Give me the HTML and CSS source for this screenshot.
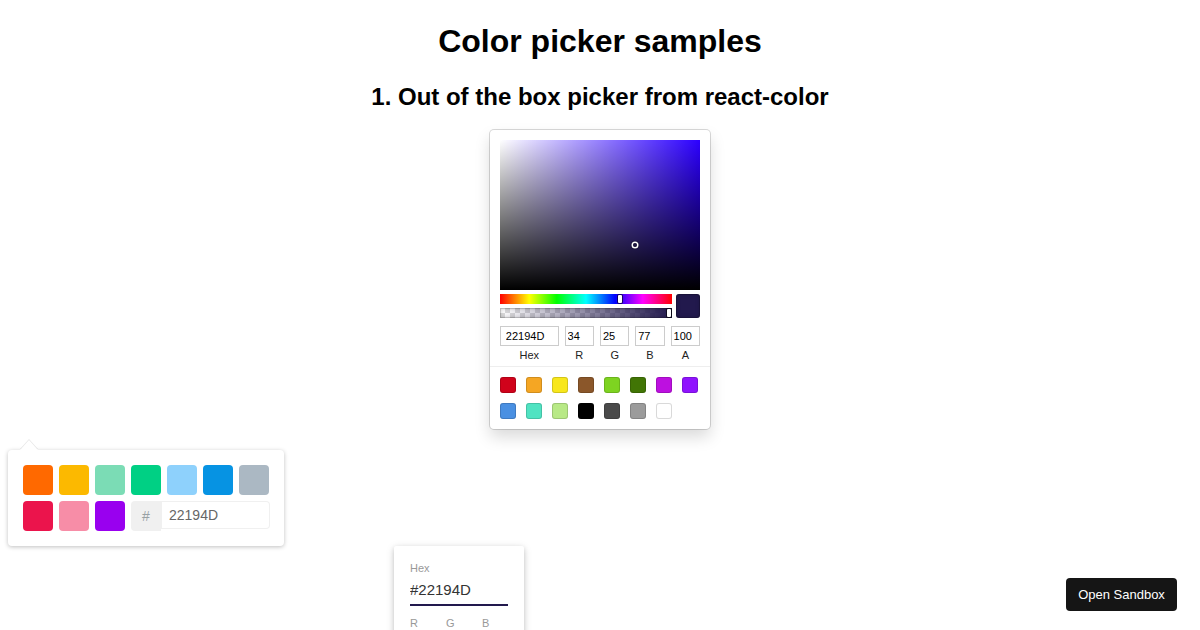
FILE: index.html
```html
<!DOCTYPE html>
<html>
<head>
<meta charset="utf-8">
<title>Color picker samples</title>
<link rel="stylesheet" href="styles.css">
</head>
<body>
<h1 class="title">Color picker samples</h1>
<h2 class="subtitle">1. Out of the box picker from react-color</h2>

<div class="center">
  <div class="sketch">
    <div class="sat">
      <div class="sat-white"></div>
      <div class="sat-black"></div>
      <div class="sat-pointer" style="left:67.5%;top:69.8%"></div>
    </div>
    <div class="controls">
      <div class="sliders">
        <div class="hue">
          <div class="slider-pointer" style="left:69.6%"></div>
        </div>
        <div class="alpha">
          <div class="alpha-fill"></div>
          <div class="slider-pointer" style="left:98.5%"></div>
        </div>
      </div>
      <div class="current"></div>
    </div>
    <div class="fields">
      <div class="field field-hex"><input class="f-input" value="22194D"><span class="f-label">Hex</span></div>
      <div class="field"><input class="f-input" value="34"><span class="f-label">R</span></div>
      <div class="field"><input class="f-input" value="25"><span class="f-label">G</span></div>
      <div class="field"><input class="f-input" value="77"><span class="f-label">B</span></div>
      <div class="field"><input class="f-input" value="100"><span class="f-label">A</span></div>
    </div>
    <div class="presets">
      <span class="preset" style="background:#D0021B"></span>
      <span class="preset" style="background:#F5A623"></span>
      <span class="preset" style="background:#F8E71C"></span>
      <span class="preset" style="background:#8B572A"></span>
      <span class="preset" style="background:#7ED321"></span>
      <span class="preset" style="background:#417505"></span>
      <span class="preset" style="background:#BD10E0"></span>
      <span class="preset" style="background:#9013FE"></span>
      <span class="preset" style="background:#4A90E2"></span>
      <span class="preset" style="background:#50E3C2"></span>
      <span class="preset" style="background:#B8E986"></span>
      <span class="preset" style="background:#000000"></span>
      <span class="preset" style="background:#4A4A4A"></span>
      <span class="preset" style="background:#9B9B9B"></span>
      <span class="preset" style="background:#FFFFFF"></span>
    </div>
  </div>
</div>

<div class="twitter">
  <div class="tw-triangle-shadow"></div>
  <div class="tw-triangle"></div>
  <div class="tw-body">
    <span class="tw-swatch" style="background:#FF6900"></span>
    <span class="tw-swatch" style="background:#FCB900"></span>
    <span class="tw-swatch" style="background:#7BDCB5"></span>
    <span class="tw-swatch" style="background:#00D084"></span>
    <span class="tw-swatch" style="background:#8ED1FC"></span>
    <span class="tw-swatch" style="background:#0693E3"></span>
    <span class="tw-swatch" style="background:#ABB8C3"></span>
    <span class="tw-swatch" style="background:#EB144C"></span>
    <span class="tw-swatch" style="background:#F78DA7"></span>
    <span class="tw-swatch" style="background:#9900EF"></span>
    <span class="tw-hash">#</span>
    <input class="tw-input" value="22194D">
  </div>
</div>

<div class="material">
  <div class="m-hex">
    <span class="m-label">Hex</span>
    <input class="m-hex-input" value="#22194D">
  </div>
  <div class="m-split">
    <div class="m-third"><span class="m-label">R</span><input class="m-input" value="34"></div>
    <div class="m-third"><span class="m-label">G</span><input class="m-input" value="25"></div>
    <div class="m-third"><span class="m-label">B</span><input class="m-input" value="77"></div>
  </div>
</div>

<a class="sandbox-btn" href="#">Open Sandbox</a>
</body>
</html>
```

FILE: styles.css
```css
html, body {
  margin: 0;
  padding: 0;
}
body {
  padding: 0 8px;
  font-family: "Liberation Sans", Arial, sans-serif;
  color: #000;
  background: #fff;
  overflow: hidden;
  height: 630px;
}
.title {
  font-size: 32px;
  font-weight: bold;
  text-align: center;
  margin: 23px 0 0;
  line-height: 37px;
}
.subtitle {
  font-size: 24px;
  font-weight: bold;
  text-align: center;
  margin: 23px 0 0;
  line-height: 28px;
}
.center {
  display: flex;
  justify-content: center;
  margin-top: 19px;
}

/* Sketch picker */
.sketch {
  width: 220px;
  box-sizing: border-box;
  padding: 10px 10px 0;
  background: #fff;
  border-radius: 4px;
  box-shadow: rgba(0,0,0,0.15) 0 0 0 1px, rgba(0,0,0,0.15) 0 8px 16px;
}
.sat {
  position: relative;
  height: 150px;
  background: hsl(250.4, 100%, 50%);
  overflow: hidden;
}
.sat-white {
  position: absolute;
  inset: 0;
  background: linear-gradient(to right, #fff, rgba(255,255,255,0));
}
.sat-black {
  position: absolute;
  inset: 0;
  background: linear-gradient(to top, #000, rgba(0,0,0,0));
}
.sat-pointer {
  position: absolute;
  width: 4px;
  height: 4px;
  border-radius: 50%;
  transform: translate(-2px, -2px);
  box-shadow: 0 0 0 1.5px #fff, inset 0 0 1px 1px rgba(0,0,0,0.3), 0 0 1px 2px rgba(0,0,0,0.4);
}
.controls {
  display: flex;
}
.sliders {
  flex: 1;
  padding: 4px 0;
}
.hue, .alpha {
  position: relative;
  height: 10px;
}
.hue {
  background: linear-gradient(to right, #f00 0%, #ff0 17%, #0f0 33%, #0ff 50%, #00f 67%, #f0f 83%, #f00 100%);
}
.alpha {
  margin-top: 4px;
  background-color: #fff;
  background-image:
    linear-gradient(45deg, #dcdcdc 25%, transparent 25%, transparent 75%, #dcdcdc 75%),
    linear-gradient(45deg, #dcdcdc 25%, transparent 25%, transparent 75%, #dcdcdc 75%);
  background-size: 10px 10px;
  background-position: 0 0, 5px 5px;
}
.alpha-fill {
  position: absolute;
  inset: 0;
  background: linear-gradient(to right, rgba(34,25,77,0), rgb(34,25,77));
  box-shadow: inset 0 0 0 1px rgba(0,0,0,0.15), inset 0 0 4px rgba(0,0,0,0.25);
}
.slider-pointer {
  position: absolute;
  top: 1px;
  width: 4px;
  height: 8px;
  background: #fff;
  border-radius: 1px;
  box-shadow: 0 0 0 1px rgba(0,0,0,0.6);
  transform: translateX(-2px);
}
.current {
  width: 24px;
  height: 24px;
  margin: 4px 0 0 4px;
  border-radius: 3px;
  background: #22194D;
  box-shadow: inset 0 0 0 1px rgba(0,0,0,0.15), inset 0 0 4px rgba(0,0,0,0.25);
}
.fields {
  display: flex;
  padding-top: 4px;
}
.field {
  flex: 1;
  padding-left: 6px;
  min-width: 0;
}
.field-hex {
  flex: 2;
  padding-left: 0;
}
.f-input {
  display: block;
  width: 80%;
  padding: 4px 10% 3px;
  border: none;
  box-shadow: inset 0 0 0 1px #ccc;
  font-size: 11px;
  font-family: "Liberation Sans", Arial, sans-serif;
  color: #000;
  line-height: 13px;
  outline: none;
  margin: 0;
  background: #fff;
}
.f-label {
  display: block;
  text-align: center;
  font-size: 11px;
  line-height: 13px;
  color: #222;
  padding-top: 3px;
  padding-bottom: 4px;
}
.presets {
  display: flex;
  flex-wrap: wrap;
  margin: 0 -10px;
  padding: 10px 0 0 10px;
  border-top: 1px solid #eee;
}
.preset {
  width: 16px;
  height: 16px;
  margin: 0 10px 10px 0;
  border-radius: 3px;
  box-shadow: inset 0 0 0 1px rgba(0,0,0,0.15);
}

/* Twitter picker */
.twitter {
  position: relative;
  width: 276px;
  margin-top: 21px;
  background: #fff;
  border-radius: 4px;
  box-shadow: 0 1px 4px rgba(0,0,0,0.25);
}
.tw-triangle, .tw-triangle-shadow {
  position: absolute;
  left: 12px;
  width: 0;
  height: 0;
  border-style: solid;
  border-width: 0 9px 10px;
}
.tw-triangle {
  top: -10px;
  border-color: transparent transparent #fff;
}
.tw-triangle-shadow {
  top: -11px;
  border-color: transparent transparent rgba(0,0,0,0.1);
}
.tw-body {
  display: flex;
  flex-wrap: wrap;
  align-items: flex-start;
  padding: 15px 9px 9px 15px;
}
.tw-swatch {
  width: 30px;
  height: 30px;
  margin: 0 6px 6px 0;
  border-radius: 4px;
}
.tw-hash {
  width: 30px;
  height: 30px;
  background: #F0F0F0;
  border-radius: 4px 0 0 4px;
  color: #98A1A4;
  font-size: 14px;
  display: flex;
  align-items: center;
  justify-content: center;
}
.tw-input {
  width: 101px;
  height: 28px;
  padding: 0 0 0 8px;
  margin: 0;
  border: 0;
  outline: none;
  font-size: 14px;
  font-family: "Liberation Sans", Arial, sans-serif;
  color: #666;
  box-shadow: inset 0 0 0 1px #F0F0F0;
  box-sizing: content-box;
  border-radius: 0 4px 4px 0;
  background: #fff;
}

/* Material picker */
.material {
  width: 130px;
  height: 130px;
  box-sizing: border-box;
  padding: 16px;
  margin-left: 386px;
  background: #fff;
  border-radius: 2px;
  font-family: "Liberation Sans", Arial, sans-serif;
  box-shadow: 0 2px 10px rgba(0,0,0,0.12), 0 2px 5px rgba(0,0,0,0.16);
}
.m-label {
  display: block;
  font-size: 11px;
  line-height: 12px;
  color: #999;
}
.m-hex-input {
  display: block;
  width: 100%;
  box-sizing: border-box;
  height: 32px;
  padding: 0;
  margin: 0;
  border: 0;
  border-bottom: 2px solid #22194D;
  outline: none;
  font-size: 15px;
  font-family: "Liberation Sans", Arial, sans-serif;
  color: #333;
  background: transparent;
}
.m-split {
  display: flex;
  margin-right: -10px;
  padding-top: 11px;
}
.m-third {
  flex: 1;
  padding-right: 10px;
  min-width: 0;
}
.m-input {
  display: block;
  width: 100%;
  box-sizing: border-box;
  height: 30px;
  padding: 0;
  margin: 0;
  border: 0;
  border-bottom: 1px solid #eee;
  outline: none;
  font-size: 15px;
  font-family: "Liberation Sans", Arial, sans-serif;
  color: #333;
  background: transparent;
}

/* Sandbox button */
.sandbox-btn {
  position: fixed;
  right: 23px;
  bottom: 19px;
  width: 111px;
  height: 33px;
  box-sizing: border-box;
  display: flex;
  align-items: center;
  justify-content: center;
  background: #151515;
  color: #fff;
  font-family: "Liberation Sans", Arial, sans-serif;
  font-size: 13px;
  text-decoration: none;
  border-radius: 4px;
}
```
